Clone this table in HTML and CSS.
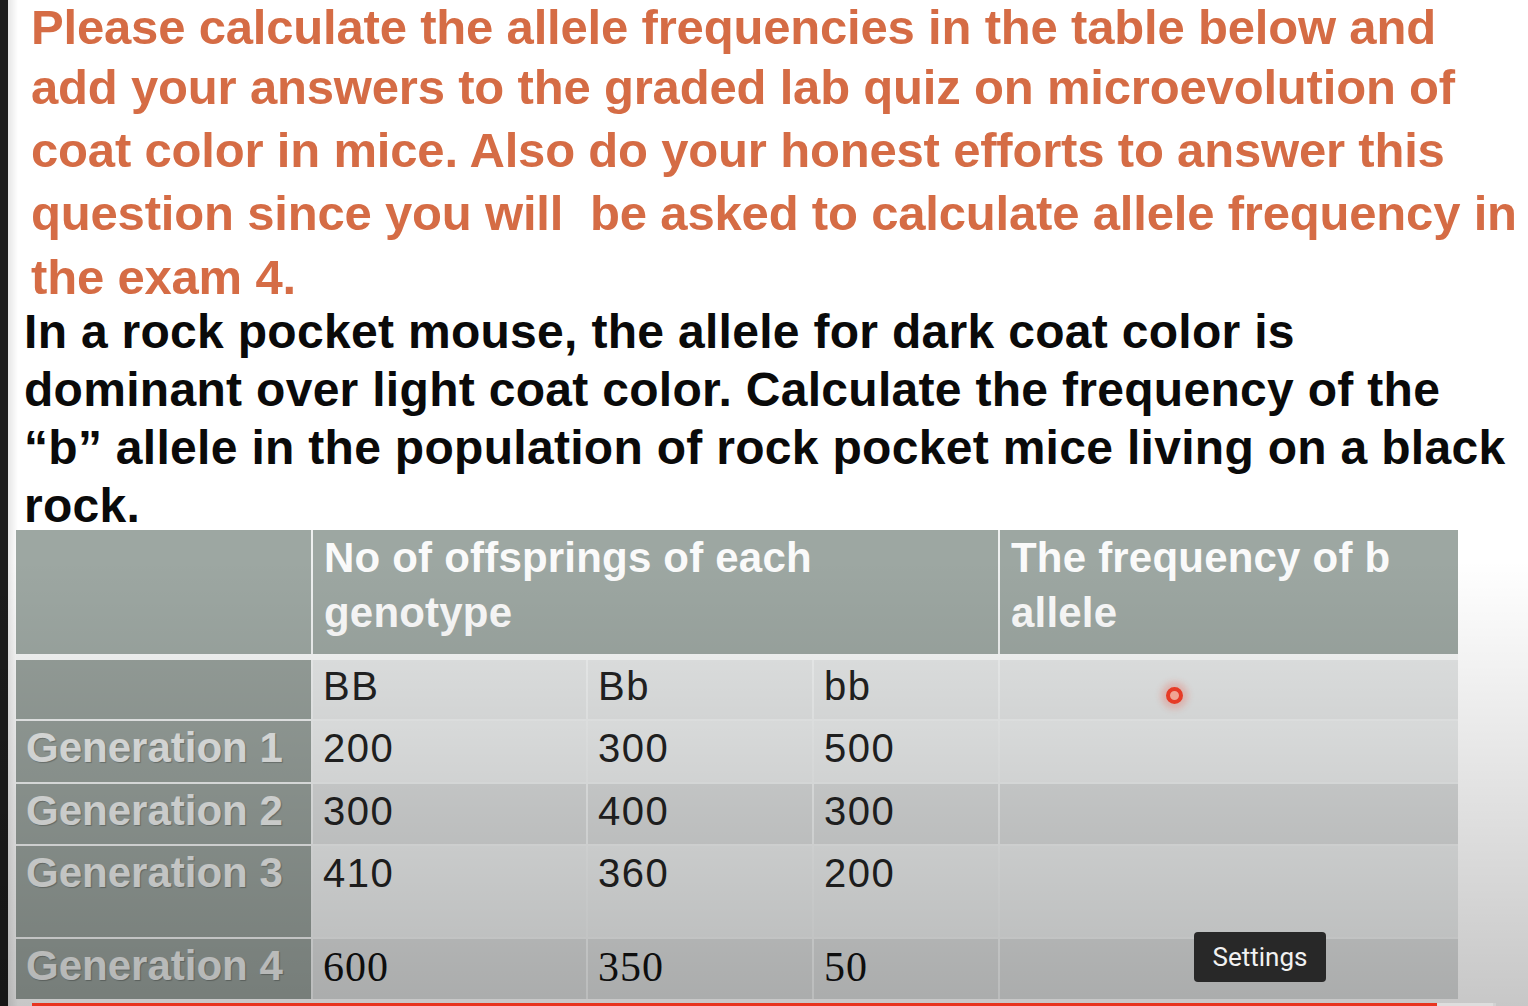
FILE: index.html
```html
<!DOCTYPE html>
<html>
<head>
<meta charset="utf-8">
<link rel="stylesheet" href="styles.css">
</head>
<body>
<div class="strip"></div>
<main class="slide">
  <p class="lead"><span class="ln first">Please calculate the allele frequencies in the table below and</span><span class="ln">add your answers to the graded lab quiz on microevolution of</span><span class="ln">coat color in mice. Also do your honest efforts to answer this</span><span class="ln">question since you will&nbsp; be asked to calculate allele frequency in</span><span class="ln">the exam 4.</span></p>
  <p class="question">In a rock pocket mouse, the allele for dark coat color is<br>dominant over light coat color. Calculate the frequency of the<br>“b” allele in the population of rock pocket mice living on a black<br>rock.</p>
  <div class="table">
    <div class="thead">
      <div class="hcell"></div>
      <div class="hcell span3">No of offsprings of each<br>genotype</div>
      <div class="hcell">The frequency of b<br>allele</div>
    </div>
    <div class="tbody">
      <div class="label r0"></div>
      <div class="cell r0">BB</div>
      <div class="cell r0">Bb</div>
      <div class="cell r0">bb</div>
      <div class="cell r0"></div>

      <div class="label r1">Generation 1</div>
      <div class="cell light r1">200</div>
      <div class="cell light r1">300</div>
      <div class="cell light r1">500</div>
      <div class="cell light r1"></div>

      <div class="label r2">Generation 2</div>
      <div class="cell dark r2">300</div>
      <div class="cell dark r2">400</div>
      <div class="cell dark r2">300</div>
      <div class="cell dark r2"></div>

      <div class="label r3">Generation 3</div>
      <div class="cell light r3">410</div>
      <div class="cell light r3">360</div>
      <div class="cell light r3">200</div>
      <div class="cell light r3"></div>

      <div class="label r4">Generation 4</div>
      <div class="cell dark serif r4">600</div>
      <div class="cell dark serif r4">350</div>
      <div class="cell dark serif r4">50</div>
      <div class="cell dark r4"></div>
    </div>
  </div>
</main>
<div class="shade"></div>
<div class="cursor-dot"></div>
<div class="tooltip">Settings</div>
<div class="progress"><div class="loaded"></div><div class="played"></div></div>
</body>
</html>
```

FILE: styles.css
```css
html, body {
  margin: 0;
  padding: 0;
}
body {
  width: 1528px;
  height: 1006px;
  overflow: hidden;
  display: flex;
  background: #ffffff;
  position: relative;
  font-family: "Liberation Sans", Arial, sans-serif;
}
.strip {
  width: 8px;
  flex: 0 0 8px;
  background: #1c1c1c;
}
.slide {
  flex: 1;
  display: flex;
  flex-direction: column;
  background: linear-gradient(to right, #e6e6e6 0px, #ffffff 10px);
}
.lead {
  margin: 0;
  padding-left: 23px;
  font-weight: bold;
  font-size: 49px;
  line-height: 63.3px;
  letter-spacing: -0.18px;
  color: #d56c45;
  white-space: nowrap;
}
.ln {
  display: block;
}
.ln.first {
  line-height: 55px;
  margin-bottom: 0.7px;
}
.question {
  margin: -6px 0 0 0;
  padding-left: 16px;
  font-weight: bold;
  font-size: 48px;
  line-height: 58px;
  letter-spacing: 0.3px;
  color: #0a0a0a;
  white-space: nowrap;
}
.table {
  margin: -5px 0 0 8px;
  width: 1442px;
  display: flex;
  flex-direction: column;
  gap: 6px;
  background: #f6f7f7;
}
.thead, .tbody {
  display: grid;
  grid-template-columns: 295px 273px 224px 184px 458px;
  column-gap: 2px;
  background: #eef0f0;
}
.thead {
  grid-template-rows: 124px;
}
.tbody {
  grid-template-rows: 59px 61px 60px 91px 60px;
  row-gap: 2px;
}
.hcell {
  background: #9da7a2;
  color: #fafafa;
  font-weight: bold;
  font-size: 42px;
  line-height: 55px;
  padding: 0 0 0 11px;
  letter-spacing: 0.2px;
}
.span3 {
  grid-column: span 3;
}
.label {
  background: #97a09b;
  color: #e6e8e7;
  font-weight: bold;
  font-size: 42px;
  line-height: 46px;
  padding: 4px 0 0 10px;
  text-shadow: 1px 1px 1px rgba(0, 0, 0, 0.25);
  white-space: nowrap;
}
.cell {
  background: #e4e6e6;
  color: #222222;
  font-size: 40px;
  line-height: 46px;
  letter-spacing: 1.5px;
  padding: 3px 0 0 10px;
}
.cell.light {
  background: #eaecec;
  padding-top: 4px;
}
.cell.dark {
  background: #dadcdc;
  padding-top: 4px;
}
.cell.serif {
  font-family: "Liberation Serif", "Times New Roman", serif;
  font-size: 42px;
  letter-spacing: 1px;
  color: #111111;
  padding-top: 5px;
}
.shade {
  position: absolute;
  left: 0;
  top: 0;
  width: 1528px;
  height: 1006px;
  pointer-events: none;
  background: linear-gradient(to bottom, rgba(0,0,0,0) 0px, rgba(0,0,0,0) 560px, rgba(0,0,0,0.22) 1006px);
}
.cursor-dot {
  position: absolute;
  left: 1166px;
  top: 687px;
  width: 9px;
  height: 9px;
  border-radius: 50%;
  border: 4px solid #e63b26;
  background: #f0a592;
  box-shadow: 0 0 6px 5px rgba(240, 70, 50, 0.25);
}
.tooltip {
  position: absolute;
  left: 1194px;
  top: 932px;
  width: 132px;
  height: 50px;
  border-radius: 4px;
  background: #282828;
  color: #f1f1f1;
  font-family: Roboto, "Liberation Sans", sans-serif;
  font-size: 26px;
  line-height: 50px;
  text-align: center;
}
.progress {
  position: absolute;
  left: 32px;
  top: 1003px;
  width: 1464px;
  height: 3px;
  background: rgba(255, 255, 255, 0.2);
}
.loaded {
  position: absolute;
  left: 0;
  top: 0;
  width: 1461px;
  height: 3px;
  background: rgba(230, 230, 230, 0.6);
}
.played {
  position: absolute;
  left: 0;
  top: 0;
  width: 1405px;
  height: 3px;
  background: #e8341f;
}
```
